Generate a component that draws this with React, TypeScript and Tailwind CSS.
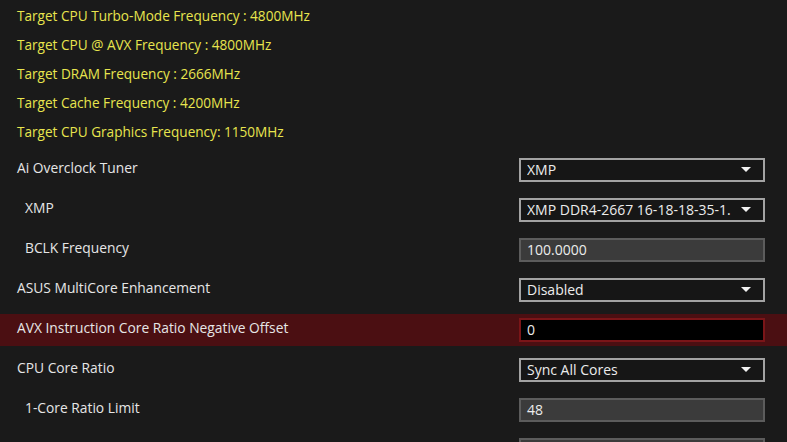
const targets = [
  'Target CPU Turbo-Mode Frequency : 4800MHz',
  'Target CPU @ AVX Frequency : 4800MHz',
  'Target DRAM Frequency : 2666MHz',
  'Target Cache Frequency : 4200MHz',
  'Target CPU Graphics Frequency: 1150MHz',
];

type Kind = 'select' | 'readonly' | 'input';

interface Setting {
  label: string;
  value: string;
  kind: Kind;
  sub?: boolean;
  active?: boolean;
}

const settings: Setting[] = [
  { label: 'Ai Overclock Tuner', value: 'XMP', kind: 'select' },
  { label: 'XMP', value: 'XMP DDR4-2667 16-18-18-35-1.', kind: 'select', sub: true },
  { label: 'BCLK Frequency', value: '100.0000', kind: 'readonly', sub: true },
  { label: 'ASUS MultiCore Enhancement', value: 'Disabled', kind: 'select' },
  { label: 'AVX Instruction Core Ratio Negative Offset', value: '0', kind: 'input', active: true },
  { label: 'CPU Core Ratio', value: 'Sync All Cores', kind: 'select' },
  { label: '1-Core Ratio Limit', value: '48', kind: 'readonly', sub: true },
  // next row is cut off by the window edge, only its box top shows
  { label: '', value: '', kind: 'readonly', sub: true },
];

function Arrow() {
  return (
    <svg width="10" height="5" viewBox="0 0 10 5" className="shrink-0">
      <path d="M0 0 L10 0 L5 5 Z" fill="#f2f2f2" />
    </svg>
  );
}

function Field({ s }: { s: Setting }) {
  const base =
    'w-[246px] h-[24px] flex items-center pl-[6px] pr-[12px] pb-[2px] text-[14px] text-[#ececec] border-2';
  if (s.kind === 'select') {
    return (
      <div className={`${base} border-[#a3a3a3] bg-[#161616] justify-between`}>
        <span className="truncate">{s.value}</span>
        <Arrow />
      </div>
    );
  }
  if (s.kind === 'input') {
    return (
      <div className={`${base} border-[#7a1518] bg-black`}>
        <span>{s.value}</span>
      </div>
    );
  }
  return (
    <div className={`${base} border-[#5c5c5c] bg-[#3b3b3b]`}>
      <span>{s.value}</span>
    </div>
  );
}

export default function App() {
  return (
    <div
      className="w-[787px] h-[442px] overflow-hidden bg-[#1a1a1a] pt-[2px]"
      style={{ fontFamily: '"Open Sans", "Noto Sans", sans-serif' }}
    >
      {targets.map(t => (
        <div key={t} className="h-[29px] flex items-center pl-[17px] text-[13.6px] text-[#e8e54e]">
          {t}
        </div>
      ))}

      <div className="mt-[3px]">
        {settings.map((s, i) => (
          <div key={i} className="h-10 flex items-center">
            <div
              className={`w-full h-8 flex items-center justify-between pr-[22px] ${
                s.active ? 'bg-[#4b0f12]' : ''
              }`}
            >
              <span
                className={`text-[13.8px] text-[#e6e6e6] mb-[3px] ${s.sub ? 'pl-[25px]' : 'pl-[17px]'}`}
              >
                {s.label}
              </span>
              <Field s={s} />
            </div>
          </div>
        ))}
      </div>
    </div>
  );
}
